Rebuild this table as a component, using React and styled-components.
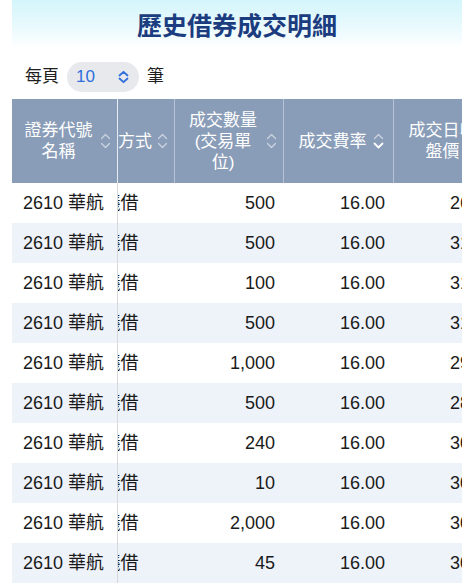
import React, { useLayoutEffect, useRef } from "react";
import styled, { createGlobalStyle } from "styled-components";

const GlobalStyle = createGlobalStyle`
  html, body { margin: 0; padding: 0; background: #ffffff; }
  body { font-family: "Liberation Sans", "Noto Sans CJK TC", sans-serif; color: #1a1a1a; }
  * { box-sizing: border-box; }
`;

const Page = styled.div`
  padding: 0 12px;
`;

const TitleBar = styled.div`
  height: 48px;
  display: flex;
  align-items: center;
  justify-content: center;
  background: linear-gradient(180deg, #d3f5fb 0%, #e9fafd 55%, #ffffff 100%);
`;

const Title = styled.h1`
  margin: 0;
  font-family: "Noto Sans CJK TC", sans-serif;
  font-size: 25px;
  line-height: 30px;
  font-weight: 700;
  color: #1c3c80;
`;

const Toolbar = styled.div`
  display: flex;
  align-items: center;
  gap: 8px;
  height: 30px;
  margin: 14px 0 7px 13px;
  font-size: 17px;
  color: #1f1f1f;
`;

const Label = styled.span`
  line-height: 30px;
`;

const SelectPill = styled.button`
  display: flex;
  align-items: center;
  justify-content: space-between;
  width: 72px;
  height: 30px;
  padding: 0 9px;
  border: none;
  border-radius: 15px;
  background: #e8e9ed;
  color: #2f6fdc;
  font-family: "Liberation Sans", sans-serif;
  font-size: 17px;
  cursor: pointer;
`;

const Scroller = styled.div`
  overflow-x: auto;
  overflow-y: hidden;
  scrollbar-width: none;
  &::-webkit-scrollbar { display: none; }
`;

const Table = styled.table`
  border-collapse: separate;
  border-spacing: 0;
  table-layout: fixed;
`;

const HeadCell = styled.th`
  position: ${(p) => (p.$sticky ? "sticky" : "static")};
  left: 0;
  z-index: ${(p) => (p.$sticky ? 2 : 0)};
  height: 84px;
  padding: 0 6px 0 11px;
  background: #8a9db8;
  color: #ffffff;
  font-weight: 400;
  font-size: 17px;
  line-height: 21px;
  white-space: ${(p) => (p.$nowrap ? "nowrap" : "normal")};
  overflow: hidden;
  border-right: 1px solid ${(p) => (p.$sticky ? "#e6ebf2" : "#b7c4d6")};
  vertical-align: middle;
`;

const HeadInner = styled.div`
  display: flex;
  align-items: center;
  justify-content: center;
  gap: 6px;
`;

const HeadText = styled.span`
  text-align: center;
  min-width: 0;
`;

const Row = styled.tr`
  background: ${(p) => (p.$striped ? "#eef3fa" : "#ffffff")};
`;

const Cell = styled.td`
  position: ${(p) => (p.$sticky ? "sticky" : "static")};
  left: 0;
  z-index: ${(p) => (p.$sticky ? 1 : 0)};
  height: 40px;
  padding: ${(p) =>
    p.$align === "right" ? "0 9px 0 0" : p.$align === "center" ? "0 7px 0 0" : "0 0 0 11px"};
  text-align: ${(p) => p.$align || "left"};
  font-size: 18px;
  line-height: 22px;
  white-space: nowrap;
  overflow: hidden;
  background: inherit;
  border-right: ${(p) => (p.$sticky ? "1px solid #d8d8d8" : "none")};
  color: #1a1a1a;
`;

const SortIcon = ({ active }) => (
  <svg width="11" height="18" viewBox="0 0 11 18" fill="none" style={{ flex: "none" }}>
    <path d="M1.5 6.5 L5.5 2.5 L9.5 6.5" stroke="rgba(255,255,255,0.55)" strokeWidth="1.3" strokeLinecap="round" strokeLinejoin="round" />
    <path
      d="M1.5 11.5 L5.5 15.5 L9.5 11.5"
      stroke={active ? "#ffffff" : "rgba(255,255,255,0.55)"}
      strokeWidth={active ? 1.8 : 1.3}
      strokeLinecap="round"
      strokeLinejoin="round"
    />
  </svg>
);

const UpDownIcon = () => (
  <svg width="13" height="14" viewBox="0 0 13 14" fill="none">
    <path d="M2.5 5.5 L6.5 1.8 L10.5 5.5" stroke="#2f6fdc" strokeWidth="1.8" strokeLinecap="round" strokeLinejoin="round" />
    <path d="M2.5 8.5 L6.5 12.2 L10.5 8.5" stroke="#2f6fdc" strokeWidth="1.8" strokeLinecap="round" strokeLinejoin="round" />
  </svg>
);

const columns = [
  { key: "name", title: "證券代號名稱", width: 106, align: "left", sticky: true },
  { key: "method", title: "成交方式", width: 102, align: "center", nowrap: true },
  { key: "qty", title: "成交數量(交易單位)", width: 109, align: "right" },
  { key: "rate", title: "成交費率", width: 110, align: "right", active: true },
  { key: "close", title: "成交日收盤價", width: 110, align: "right" },
  { key: "amount", title: "借券金額", width: 110, align: "right" },
];

const rows = [
  { qty: "500", close: "26.55", amount: "13,275" },
  { qty: "500", close: "31.50", amount: "15,750" },
  { qty: "100", close: "31.20", amount: "3,120" },
  { qty: "500", close: "31.05", amount: "15,525" },
  { qty: "1,000", close: "29.80", amount: "29,800" },
  { qty: "500", close: "28.40", amount: "14,200" },
  { qty: "240", close: "30.35", amount: "7,284" },
  { qty: "10", close: "30.10", amount: "301" },
  { qty: "2,000", close: "30.60", amount: "61,200" },
  { qty: "45", close: "30.25", amount: "1,361" },
].map((r) => ({ name: "2610 華航", method: "議借", rate: "16.00", ...r }));

const tableWidth = columns.reduce((s, c) => s + c.width, 0);

export default function App() {
  const scrollRef = useRef(null);
  useLayoutEffect(() => {
    if (scrollRef.current) scrollRef.current.scrollLeft = 45;
  }, []);

  return (
    <Page>
      <GlobalStyle />
      <TitleBar>
        <Title>歷史借券成交明細</Title>
      </TitleBar>
      <Toolbar>
        <Label>每頁</Label>
        <SelectPill type="button">
          <span>10</span>
          <UpDownIcon />
        </SelectPill>
        <Label>筆</Label>
      </Toolbar>
      <Scroller ref={scrollRef}>
        <Table style={{ width: tableWidth }}>
          <colgroup>
            {columns.map((c) => (
              <col key={c.key} style={{ width: c.width }} />
            ))}
          </colgroup>
          <thead>
            <tr>
              {columns.map((c) => (
                <HeadCell key={c.key} $sticky={c.sticky} $nowrap={c.nowrap}>
                  <HeadInner>
                    <HeadText>{c.title}</HeadText>
                    <SortIcon active={c.active} />
                  </HeadInner>
                </HeadCell>
              ))}
            </tr>
          </thead>
          <tbody>
            {rows.map((r, i) => (
              <Row key={i} $striped={i % 2 === 1}>
                {columns.map((c) => (
                  <Cell key={c.key} $sticky={c.sticky} $align={c.align}>
                    {r[c.key]}
                  </Cell>
                ))}
              </Row>
            ))}
          </tbody>
        </Table>
      </Scroller>
    </Page>
  );
}
